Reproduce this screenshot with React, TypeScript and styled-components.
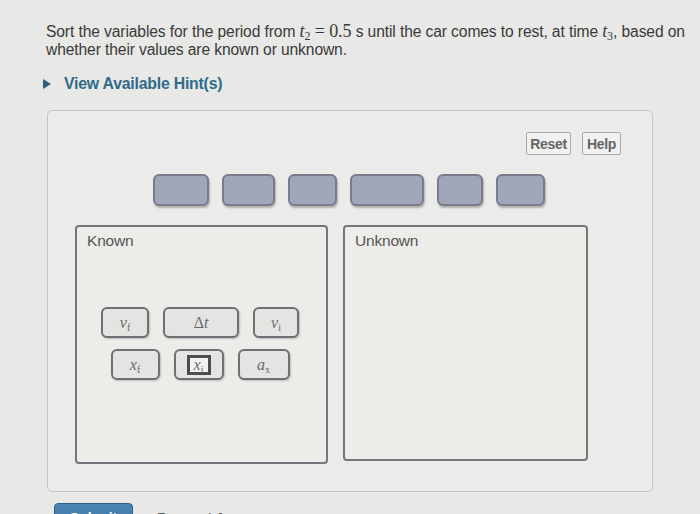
import styled, { createGlobalStyle } from "styled-components";

const GlobalStyle = createGlobalStyle`
	html, body {
		margin: 0;
		padding: 0;
		height: 100%;
		overflow: hidden;
		background: #e8e8e6;
	}
	body {
		font-family: "Liberation Sans", Arial, sans-serif;
		color: #333;
	}
`;

const tiles = [56, 53, 49, 74, 46, 49];

const knownChips = [
	{ label: <><i>v</i><sub>f</sub></>, width: 48 },
	{ label: <>Δ<i>t</i></>, width: 76 },
	{ label: <><i>v</i><sub>i</sub></>, width: 46 },
	{ label: <><i>x</i><sub>f</sub></>, width: 49 },
	{ label: <><i>x</i><sub>i</sub></>, width: 50, focused: true },
	{ label: <><i>a</i><sub>x</sub></>, width: 52 },
];

const Page = styled.div`
	padding: 22px 0 0 46px;
`;

const Prompt = styled.p`
	margin: 0;
	width: 654px;
	font-size: 15.6px;
	line-height: 18px;
	color: #3a3a3a;
	letter-spacing: -0.1px;
`;

const MathVar = styled.span`
	font-family: "Liberation Serif", "Times New Roman", serif;
	font-size: 18px;
	& i {
		font-style: italic;
	}
	& sub {
		font-size: 12px;
		vertical-align: -3px;
		line-height: 0;
	}
`;

const HintRow = styled.div`
	display: flex;
	align-items: center;
	gap: 13px;
	margin: 16px 0 0 -3px;
	color: #2f6b8a;
	font-size: 15.8px;
	font-weight: bold;
	letter-spacing: -0.2px;
`;

const Caret = styled.span`
	width: 0;
	height: 0;
	border-top: 5.5px solid transparent;
	border-bottom: 5.5px solid transparent;
	border-left: 8px solid #2f5f7c;
`;

const Panel = styled.div`
	box-sizing: border-box;
	width: 606px;
	height: 382px;
	margin: 17px 0 0 1px;
	border: 1px solid #c5c5c3;
	border-radius: 5px;
	background: #ebebe9;
	padding: 21px 31px 0 27px;
`;

const Toolbar = styled.div`
	display: flex;
	justify-content: flex-end;
	gap: 11px;
`;

const ToolButton = styled.button<{ $w: number }>`
	box-sizing: border-box;
	width: ${(p) => p.$w}px;
	height: 23px;
	padding: 0;
	border: 1px solid #a9a9a9;
	border-radius: 2px;
	background: #f1f1ef;
	color: #666;
	font-family: "Liberation Sans", Arial, sans-serif;
	font-size: 14px;
	font-weight: bold;
	letter-spacing: -0.3px;
`;

const TileRow = styled.div`
	display: flex;
	justify-content: center;
	gap: 13px;
	margin: 19px 0 0 2px;
`;

const Tile = styled.div<{ $w: number }>`
	box-sizing: border-box;
	width: ${(p) => p.$w}px;
	height: 32px;
	border: 2px solid #797c8a;
	border-radius: 6px;
	background: #a1a6b8;
	box-shadow: 1px 2px 2px rgba(0, 0, 0, 0.25);
`;

const Bins = styled.div`
	display: flex;
	gap: 15px;
	margin-top: 19px;
`;

const Bin = styled.div<{ $w: number; $h: number }>`
	box-sizing: border-box;
	width: ${(p) => p.$w}px;
	height: ${(p) => p.$h}px;
	border: 2px solid #76767a;
	border-radius: 4px;
	background: #ecece9;
	padding: 5px 0 0 10px;
`;

const BinLabel = styled.div`
	font-size: 15.5px;
	color: #555;
	letter-spacing: -0.2px;
`;

const ChipArea = styled.div`
	display: flex;
	flex-wrap: wrap;
	justify-content: center;
	gap: 11px 14px;
	width: 212px;
	margin: 57px 0 0 7px;
`;

const Chip = styled.div<{ $w: number }>`
	box-sizing: border-box;
	width: ${(p) => p.$w}px;
	height: 31px;
	display: flex;
	align-items: center;
	justify-content: center;
	border: 2px solid #6f6f74;
	border-radius: 6px;
	background: #e4e4e2;
	box-shadow: 1px 1px 2px rgba(0, 0, 0, 0.2);
	color: #6a6a6a;
	font-family: "Liberation Serif", "Times New Roman", serif;
	font-size: 16px;
`;

const ChipLabel = styled.span`
	line-height: 1;
	& sub {
		font-size: 10px;
		vertical-align: -3px;
		line-height: 0;
	}
`;

const FocusBox = styled.span`
	box-sizing: border-box;
	display: flex;
	align-items: center;
	justify-content: center;
	width: 24px;
	height: 20px;
	border: 3px solid #4c4c52;
	background: #f2f2f0;
`;

const Footer = styled.div`
	display: flex;
	align-items: flex-start;
	gap: 24px;
	margin: 11px 0 0 8px;
`;

const SubmitButton = styled.button`
	box-sizing: border-box;
	width: 79px;
	height: 30px;
	border: 1px solid #2d5f88;
	border-radius: 4px;
	background: linear-gradient(#4d86b5, #3a72a2);
	color: #fff;
	font-family: "Liberation Sans", Arial, sans-serif;
	font-size: 14px;
	font-weight: bold;
	padding: 0;
`;

const LinkText = styled.span`
	margin-top: 7px;
	font-size: 14px;
	font-weight: bold;
	color: #555;
`;

export default function App() {
	return (
		<>
			<GlobalStyle />
			<Page>
				<Prompt>
					Sort the variables for the period from{" "}
					<MathVar>
						<i>t</i>
						<sub>2</sub> = 0.5
					</MathVar>{" "}
					s until the car comes to rest, at time{" "}
					<MathVar>
						<i>t</i>
						<sub>3</sub>
					</MathVar>
					, based on whether their values are known or unknown.
				</Prompt>
				<HintRow>
					<Caret />
					View Available Hint(s)
				</HintRow>
				<Panel>
					<Toolbar>
						<ToolButton $w={45}>Reset</ToolButton>
						<ToolButton $w={39}>Help</ToolButton>
					</Toolbar>
					<TileRow>
						{tiles.map((w, i) => (
							<Tile key={i} $w={w} />
						))}
					</TileRow>
					<Bins>
						<Bin $w={253} $h={239}>
							<BinLabel>Known</BinLabel>
							<ChipArea>
								{knownChips.map((c, i) => (
									<Chip key={i} $w={c.width}>
										{c.focused ? (
											<FocusBox>
												<ChipLabel>{c.label}</ChipLabel>
											</FocusBox>
										) : (
											<ChipLabel>{c.label}</ChipLabel>
										)}
									</Chip>
								))}
							</ChipArea>
						</Bin>
						<Bin $w={245} $h={236}>
							<BinLabel>Unknown</BinLabel>
						</Bin>
					</Bins>
				</Panel>
				<Footer>
					<SubmitButton>Submit</SubmitButton>
					<LinkText>Request Answer</LinkText>
				</Footer>
			</Page>
		</>
	);
}
